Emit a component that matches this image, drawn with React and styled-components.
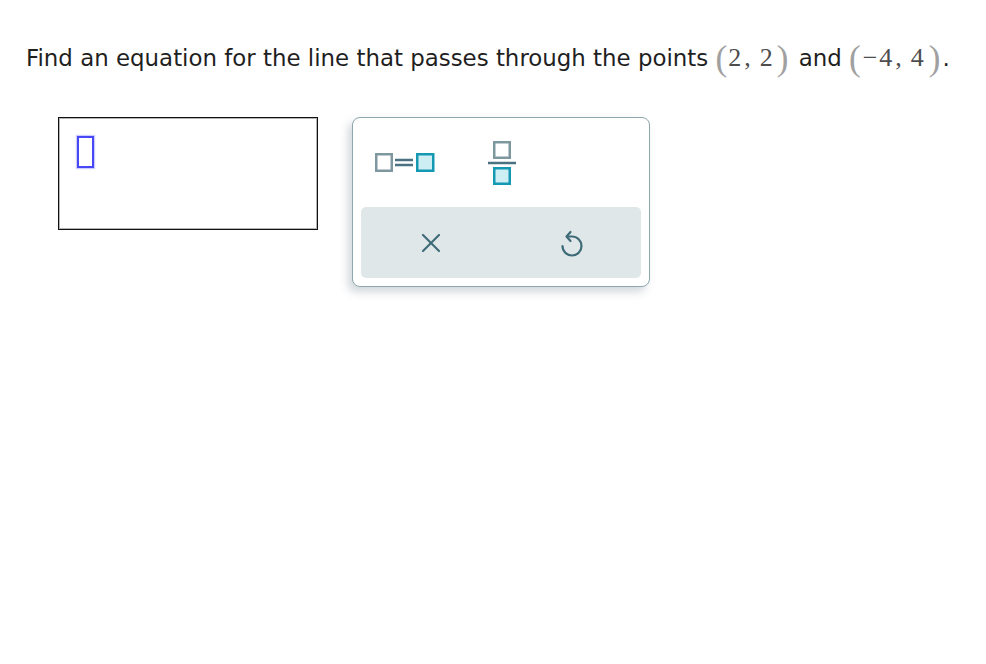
import React from "react";
import styled, { createGlobalStyle } from "styled-components";

const Global = createGlobalStyle`
  html, body { margin: 0; padding: 0; background: #ffffff; }
  body { font-family: "DejaVu Sans", Verdana, sans-serif; color: #1a1a1a; }
`;

const Page = styled.div`
  width: 986px;
  height: 664px;
  box-sizing: border-box;
  padding-top: 40px;
`;

const Question = styled.div`
  padding-left: 26px;
  font-size: 22.9px;
  line-height: 36px;
  height: 36px;
  white-space: nowrap;
  color: #1f1f1f;
`;

const MathGroup = styled.span`
  display: inline-flex;
  align-items: baseline;
  font-family: "Liberation Serif", "DejaVu Serif", serif;
  margin: 0 ${(p) => p.$mr || 0}px 0 ${(p) => p.$ml || 0}px;
  line-height: 20px;
`;

const Paren = styled.span`
  font-size: 35px;
  color: #a0a0a0;
  line-height: 20px;
  transform: translateY(4px);
  margin-left: ${(p) => p.$ml || 0}px;
  margin-right: ${(p) => p.$mr || 0}px;
`;

const Num = styled.span`
  font-size: 26px;
  line-height: 20px;
  color: #4d4d4d;
  margin-left: ${(p) => p.$ml || 0}px;
  margin-right: ${(p) => p.$mr || 0}px;
`;

const Workspace = styled.div`
  display: flex;
  align-items: flex-start;
  gap: 34px;
  padding-left: 58px;
  margin-top: 41px;
`;

const AnswerBox = styled.div`
  width: 260px;
  height: 113px;
  box-sizing: border-box;
  border: 1px solid #111;
  box-shadow: inset 0 0 0 1px #b5b5b5;
  padding: 18px 0 0 18px;
`;

const Cursor = styled.div`
  width: 17px;
  height: 32px;
  box-sizing: border-box;
  border: 2px solid #4747f5;
  box-shadow: 0 0 1px 1px rgba(110, 110, 255, 0.35);
`;

const Panel = styled.div`
  width: 298px;
  height: 170px;
  box-sizing: border-box;
  border: 1px solid #8ea6ad;
  border-radius: 8px;
  background: #fff;
  box-shadow: -4px 5px 8px rgba(80, 105, 115, 0.26);
  padding: 8px;
  display: flex;
  flex-direction: column;
  gap: 8px;
`;

const TemplateRow = styled.div`
  height: 73px;
  display: flex;
  align-items: center;
  padding-left: 4px;
  gap: 17px;
`;

const TemplateButton = styled.button`
  width: 80px;
  height: 60px;
  border: none;
  background: transparent;
  display: flex;
  align-items: center;
  justify-content: center;
  padding: 0;
  cursor: pointer;
`;

const ActionRow = styled.div`
  flex: 1;
  display: flex;
  background: #e0e7e9;
  border-radius: 5px;
`;

const ActionButton = styled.button`
  flex: 1;
  border: none;
  background: transparent;
  display: flex;
  align-items: center;
  justify-content: center;
  padding: 0;
  color: #3f6b78;
  cursor: pointer;
`;

const GRAY = "#7f989f";
const DARK = "#4b7280";
const TEAL = "#1599b3";
const FILL = "#cdeef3";

const EqualsIcon = () => (
  <svg width="60" height="19" viewBox="0 0 60 19">
    <rect x="1.25" y="1.25" width="15.5" height="16.5" fill="#fff" stroke={GRAY} strokeWidth="2.5" />
    <line x1="20" y1="7" x2="38" y2="7" stroke={DARK} strokeWidth="2.5" />
    <line x1="20" y1="12" x2="38" y2="12" stroke={DARK} strokeWidth="2.5" />
    <rect x="42.25" y="1.25" width="16" height="16.5" fill={FILL} stroke={TEAL} strokeWidth="2.5" />
  </svg>
);

const FractionIcon = () => (
  <svg width="28" height="44" viewBox="0 0 28 44">
    <rect x="6.25" y="1.25" width="15.5" height="15.5" fill="#fff" stroke={GRAY} strokeWidth="2.5" />
    <line x1="0" y1="22" x2="28" y2="22" stroke={DARK} strokeWidth="2.5" />
    <rect x="6.25" y="27.25" width="15.5" height="15.5" fill={FILL} stroke={TEAL} strokeWidth="2.5" />
  </svg>
);

const ClearIcon = () => (
  <svg width="20" height="20" viewBox="0 0 20 20" fill="none" stroke="currentColor" strokeWidth="2.2" strokeLinecap="round">
    <line x1="2" y1="2" x2="18" y2="18" />
    <line x1="18" y1="2" x2="2" y2="18" />
  </svg>
);

const UndoIcon = () => (
  <svg width="26" height="28" viewBox="0 0 26 28" fill="none" stroke="currentColor" strokeWidth="2.2" strokeLinecap="round" strokeLinejoin="round">
    <path d="M4.5 17 A9.5 9.5 0 1 0 14 7.5 H9" />
    <path d="M12.5 3 L8.5 7.5 L12.5 12" />
  </svg>
);

export default function App() {
  return (
    <Page>
      <Global />
      <Question>
        Find an equation for the line that passes through the points{" "}
        <MathGroup $mr={3}>
          <Paren $mr={1}>(</Paren>
          <Num>2</Num>
          <Num $ml={3} $mr={9}>,</Num>
          <Num>2</Num>
          <Paren $ml={4}>)</Paren>
        </MathGroup>{" "}
        and{" "}
        <MathGroup $mr={2}>
          <Paren $mr={2}>(</Paren>
          <Num $mr={2}>−</Num>
          <Num>4</Num>
          <Num $ml={3} $mr={9}>,</Num>
          <Num>4</Num>
          <Paren $ml={5}>)</Paren>
        </MathGroup>
        .
      </Question>
      <Workspace>
        <AnswerBox>
          <Cursor />
        </AnswerBox>
        <Panel>
          <TemplateRow>
            <TemplateButton aria-label="equals">
              <EqualsIcon />
            </TemplateButton>
            <TemplateButton aria-label="fraction">
              <FractionIcon />
            </TemplateButton>
          </TemplateRow>
          <ActionRow>
            <ActionButton aria-label="clear">
              <ClearIcon />
            </ActionButton>
            <ActionButton aria-label="undo">
              <UndoIcon />
            </ActionButton>
          </ActionRow>
        </Panel>
      </Workspace>
    </Page>
  );
}
